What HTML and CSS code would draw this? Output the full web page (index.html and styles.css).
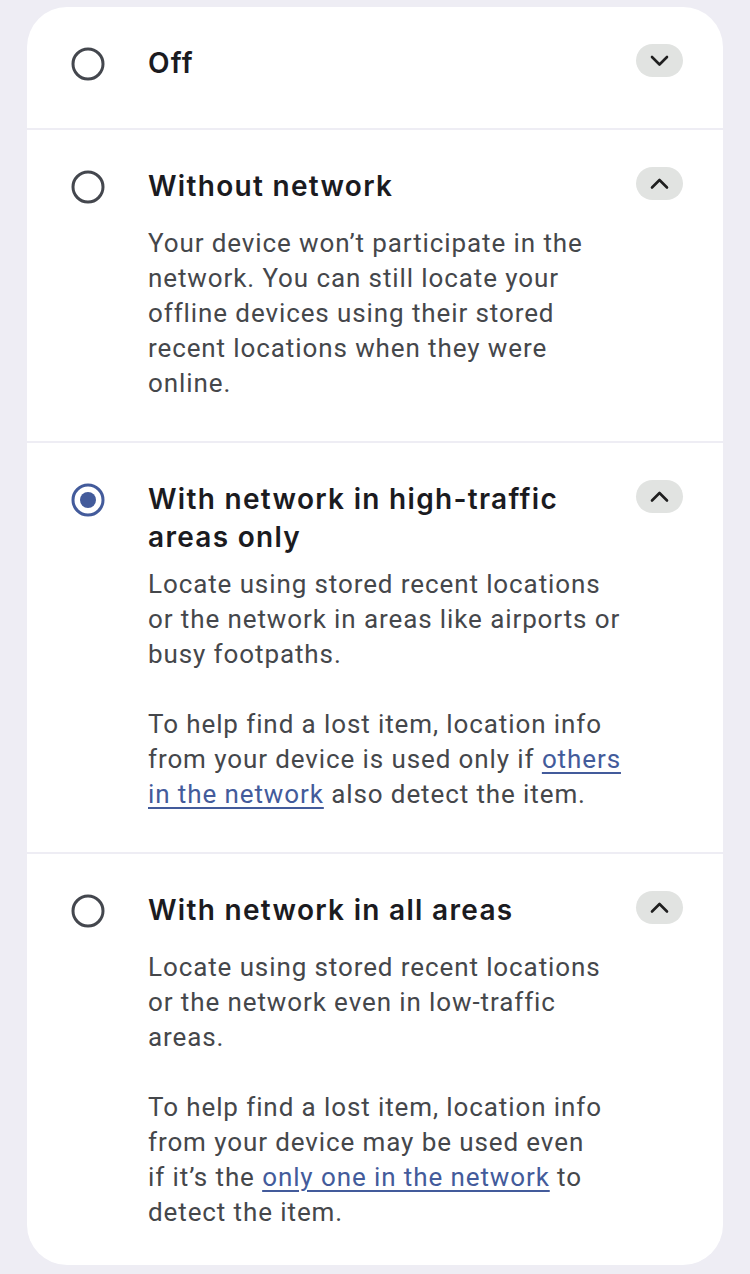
FILE: index.html
```html
<!DOCTYPE html>
<html lang="en">
<head>
<meta charset="utf-8">
<title>Network settings</title>
<link rel="stylesheet" href="styles.css">
</head>
<body>
<div class="card">
  <section class="option">
    <svg class="radio" viewBox="0 0 34 34" width="34" height="34"><circle cx="17" cy="17" r="15" class="ring"/></svg>
    <div class="content">
      <div class="title">Off</div>
    </div>
    <button class="toggle" aria-label="Expand"><svg viewBox="0 0 47 33" width="47" height="33"><path d="M16 13 L23.5 20.5 L31 13" class="chev"/></svg></button>
  </section>
  <section class="option">
    <svg class="radio" viewBox="0 0 34 34" width="34" height="34"><circle cx="17" cy="17" r="15" class="ring"/></svg>
    <div class="content">
      <div class="title">Without network</div>
      <div class="desc">
        <p>Your device won’t participate in the<br>network. You can still locate your<br>offline devices using their stored<br>recent locations when they were<br>online.</p>
      </div>
    </div>
    <button class="toggle" aria-label="Collapse"><svg viewBox="0 0 47 33" width="47" height="33"><path d="M16 20.5 L23.5 13 L31 20.5" class="chev"/></svg></button>
  </section>
  <section class="option">
    <svg class="radio selected" viewBox="0 0 34 34" width="34" height="34"><circle cx="17" cy="17" r="15" class="ring"/><circle cx="17" cy="17" r="8" class="dot"/></svg>
    <div class="content">
      <div class="title">With network in high-traffic<br>areas only</div>
      <div class="desc">
        <p>Locate using stored recent locations<br>or the network in areas like airports or<br>busy footpaths.</p>
        <p>To help find a lost item, location info<br>from your device is used only if <a href="#">others<br>in the network</a> also detect the item.</p>
      </div>
    </div>
    <button class="toggle" aria-label="Collapse"><svg viewBox="0 0 47 33" width="47" height="33"><path d="M16 20.5 L23.5 13 L31 20.5" class="chev"/></svg></button>
  </section>
  <section class="option">
    <svg class="radio" viewBox="0 0 34 34" width="34" height="34"><circle cx="17" cy="17" r="15" class="ring"/></svg>
    <div class="content">
      <div class="title">With network in all areas</div>
      <div class="desc">
        <p>Locate using stored recent locations<br>or the network even in low-traffic<br>areas.</p>
        <p>To help find a lost item, location info<br>from your device may be used even<br>if it’s the <a href="#">only one in the network</a> to<br>detect the item.</p>
      </div>
    </div>
    <button class="toggle" aria-label="Collapse"><svg viewBox="0 0 47 33" width="47" height="33"><path d="M16 20.5 L23.5 13 L31 20.5" class="chev"/></svg></button>
  </section>
</div>
</body>
</html>
```
FILE: styles.css
```css
html, body {
  margin: 0;
  padding: 0;
  background: #eeedf4;
}
body {
  padding: 7px 27px 9px;
  font-family: Roboto, "Noto Sans", sans-serif;
}
.card {
  background: #ffffff;
  border-radius: 40px;
  overflow: hidden;
}
.option {
  display: flex;
  align-items: flex-start;
  padding: 37px 40px 36px 44px;
}
.option + .option {
  border-top: 2px solid #eeedf4;
}
.option:last-child {
  padding-bottom: 31px;
}
.radio {
  flex: 0 0 auto;
  width: 34px;
  height: 34px;
  margin-top: 3px;
  margin-right: 43px;
}
.radio .ring {
  fill: none;
  stroke: #44474e;
  stroke-width: 3;
}
.radio.selected .ring {
  stroke: #435b9b;
}
.radio .dot {
  fill: #435b9b;
}
.content {
  flex: 1 1 auto;
  min-width: 0;
  white-space: nowrap;
}
.title {
  min-height: 48px;
  font-family: Inter, "Noto Sans", sans-serif;
  font-weight: 600;
  font-size: 28px;
  letter-spacing: 1.3px;
  line-height: 38px;
  color: #1b1b1f;
}
.desc {
  margin-top: 11px;
  padding-bottom: 4px;
  font-size: 26px;
  letter-spacing: 0.9px;
  line-height: 35px;
  color: #45474b;
}
.desc p {
  margin: 0 0 35px;
}
.desc p:last-child {
  margin-bottom: 0;
}
.desc a {
  color: #435b9b;
  text-decoration: underline;
  text-decoration-thickness: 2px;
  text-underline-offset: 4px;
}
.toggle {
  flex: 0 0 auto;
  width: 47px;
  height: 33px;
  margin-left: 16px;
  padding: 0;
  border: 0;
  border-radius: 17px;
  background: #e1e3e1;
  display: block;
}
.toggle svg {
  display: block;
}
.chev {
  fill: none;
  stroke: #1f1f1f;
  stroke-width: 2.6;
  stroke-linecap: round;
  stroke-linejoin: round;
}
```
